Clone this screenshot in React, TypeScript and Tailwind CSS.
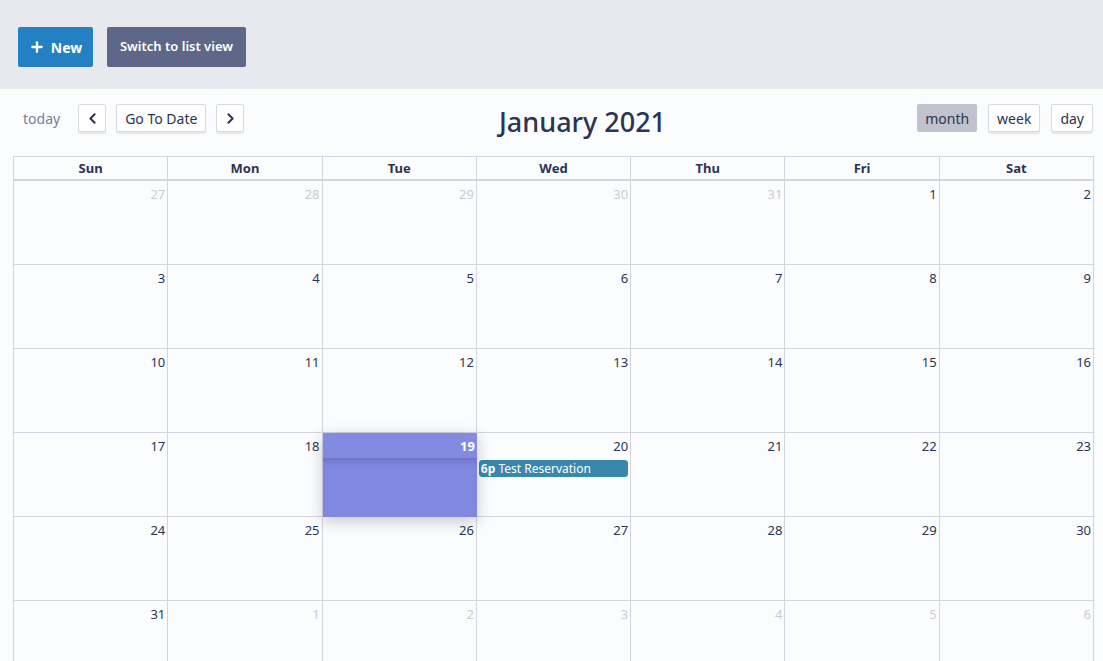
import { Plus, ChevronLeft, ChevronRight } from "lucide-react";

type Day = { n: number; muted?: boolean };

const weekdays = ["Sun", "Mon", "Tue", "Wed", "Thu", "Fri", "Sat"];

// six weeks shown for January 2021, starting Sunday Dec 27
function buildWeeks(): Day[][] {
  const days: Day[] = [];
  for (const n of [27, 28, 29, 30, 31]) days.push({ n, muted: true });
  for (let n = 1; n <= 31; n++) days.push({ n });
  for (let n = 1; n <= 6; n++) days.push({ n, muted: true });
  const weeks: Day[][] = [];
  for (let i = 0; i < days.length; i += 7) weeks.push(days.slice(i, i + 7));
  return weeks;
}

const weeks = buildWeeks();

function ToolButton({ children, active, icon }: { children: React.ReactNode; active?: boolean; icon?: boolean }) {
  const pad = icon ? "px-[9px]" : "px-[8px]";
  return (
    <button
      type="button"
      className={
        active
          ? `h-[28px] ${pad} rounded-[2px] bg-[#c1c2cd] text-[14px] text-[#2b3452]`
          : `h-[28px] ${pad} rounded-[2px] bg-white border border-[#d8d9e2] shadow-[0_2px_1px_rgba(0,0,0,0.08)] text-[14px] text-[#2b3452] flex items-center justify-center`
      }
    >
      {children}
    </button>
  );
}

export default function App() {
  return (
    <div
      className="w-[1103px] h-[661px] overflow-hidden bg-[#fbfcfe]"
      style={{ fontFamily: '"Noto Sans", "Open Sans", sans-serif' }}
    >
      {/* Action bar */}
      <div className="h-[89px] bg-[#e8e9ee] flex items-start gap-[14px] pl-[18px] pt-[27px]">
        <button
          type="button"
          className="h-[40px] w-[75px] rounded-[2px] bg-[#2280c3] text-white text-[14px] font-bold flex items-center justify-center gap-[6px]"
        >
          <Plus size={16} strokeWidth={3.5} />
          New
        </button>
        <button
          type="button"
          className="h-[40px] w-[139px] rounded-[2px] bg-[#5e6787] text-white text-[13px] font-semibold flex items-center justify-center"
        >
          Switch to list view
        </button>
      </div>

      {/* Calendar header */}
      <div className="h-[67px] flex items-start pl-[13px] pr-[10px] pt-[15px]">
        <div className="flex items-center gap-[10px] w-[486px]">
          <span className="text-[14px] text-[#7a8098] pl-[10px] pr-[8px] h-[28px] flex items-center">today</span>
          <ToolButton icon>
            <span className="w-[8px] flex justify-center">
              <ChevronLeft size={17} strokeWidth={2.8} className="shrink-0" />
            </span>
          </ToolButton>
          <ToolButton>Go To Date</ToolButton>
          <ToolButton icon>
            <span className="w-[8px] flex justify-center">
              <ChevronRight size={17} strokeWidth={2.8} className="shrink-0" />
            </span>
          </ToolButton>
        </div>
        <h2 className="text-[27px] leading-[36px] font-medium text-[#2b3452]">January 2021</h2>
        <div className="flex-1 flex items-center justify-end gap-[11px]">
          <ToolButton active>month</ToolButton>
          <ToolButton>week</ToolButton>
          <ToolButton>day</ToolButton>
        </div>
      </div>

      {/* Month grid */}
      <div className="mx-[13px] w-[1081px] border-l border-t border-[#d3d4e0]">
        <div className="grid grid-cols-7 border-b-2 border-[#d3d4e0]">
          {weekdays.map((d) => (
            <div
              key={d}
              className="h-[22px] pt-[1px] border-r border-[#d3d4e0] flex items-center justify-center text-[13px] font-bold text-[#2b3452]"
            >
              {d}
            </div>
          ))}
        </div>
        {weeks.map((week, wi) => (
          <div key={wi} className="grid grid-cols-7">
            {week.map((day, di) => {
              const selected = wi === 3 && di === 2;
              const hasEvent = wi === 3 && di === 3;
              return (
                <div
                  key={di}
                  className={
                    selected
                      ? "relative z-10 h-[84px] bg-[#8088e0] shadow-[0_4px_14px_rgba(40,40,70,0.25)] flex flex-col"
                      : "h-[84px] border-r border-b border-[#d3d4e0] flex flex-col"
                  }
                >
                  {selected ? (
                    <>
                      <div className="h-[25px] bg-[#838ae1] flex justify-end items-start pr-[2px] pt-[5px] text-[13px] font-bold text-white leading-[16px]">
                        {day.n}
                      </div>
                      <div className="flex-1 shadow-[inset_0_8px_8px_-6px_rgba(60,60,130,0.35)]" />
                    </>
                  ) : (
                    <>
                      <div
                        className={
                          "flex justify-end pr-[2px] pt-[5px] text-[13px] leading-[16px] " +
                          (day.muted ? "text-[#c9cbd5]" : "text-[#2b3452]")
                        }
                      >
                        {day.n}
                      </div>
                      {hasEvent && (
                        <div className="mt-[6px] mx-[2px] h-[17px] rounded-[3px] bg-[#3a87ad] border border-[#3a87ad] text-white text-[12px] leading-[15px] px-[1px] whitespace-nowrap overflow-hidden">
                          <span className="font-bold">6p</span> Test Reservation
                        </div>
                      )}
                    </>
                  )}
                </div>
              );
            })}
          </div>
        ))}
      </div>
    </div>
  );
}
